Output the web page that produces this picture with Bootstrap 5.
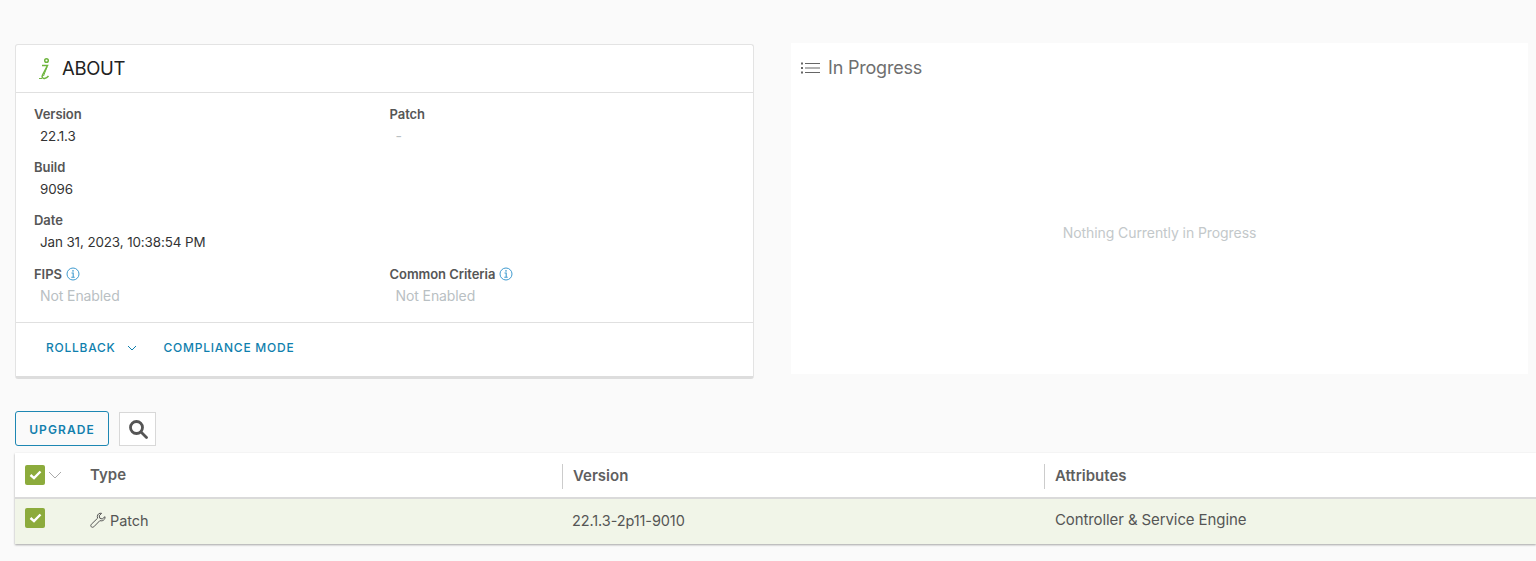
<!DOCTYPE html>
<html lang="en">
<head>
<meta charset="utf-8">
<title>System Update</title>
<link href="https://cdn.jsdelivr.net/npm/bootstrap@5.3.0/dist/css/bootstrap.min.css" rel="stylesheet">
<style>
html,body{height:561px;overflow:hidden}
body{background:#fafafa;font-family:Inter,"Liberation Sans",sans-serif;color:#333;font-size:13px;padding:43px 8px 0 15px}
.top-area{display:grid;grid-template-columns:739px 737px;column-gap:37px;align-items:start}
.about-panel{height:335px;margin-top:1px;background:#fff;border:1px solid #e3e3e3;border-bottom:3px solid #ddd;border-radius:3px;overflow:hidden}
.about-head{height:48px;border-bottom:1px solid #e0e0e0;padding-left:21px;gap:9px;font-size:18.5px;color:#222;letter-spacing:-.3px}
.about-body{height:230px;border-bottom:1px solid #e0e0e0;padding:13px 18px 0;display:grid;grid-template-columns:355.5px 1fr;grid-auto-rows:53.2px}
.fact-label{font-size:13px;font-weight:600;color:#565656;line-height:16px;height:16px;letter-spacing:-.05px}
.fact-value{font-size:13.4px;line-height:16px;margin-top:6px;padding-left:6px;color:#333;letter-spacing:-.1px}
.muted-value{color:#b9c0c3;font-size:14px}
.about-foot{height:50px;padding-left:30px;gap:27px}
.action-link{font-size:12px;font-weight:500;letter-spacing:.75px;color:#0f7fae;text-decoration:none;gap:11px}
.progress-panel{height:331px;background:#fff;padding:15px 10px;color:#6f6f6f}
.progress-title{gap:8px;font-size:18px;line-height:20px;letter-spacing:-.2px}
.progress-empty{height:290px;font-size:14px;color:#c3c8ca;padding-top:19px;letter-spacing:-.08px}
.tool-row{margin-top:32px;gap:10px;height:36px}
.upgrade-btn{width:94px;height:35px;padding:2px 0 0;font-size:12px;font-weight:600;letter-spacing:1.1px;color:#127fad;background:transparent;border:1px solid #1d87b3;border-radius:3px}
.search-btn{width:37px;height:34px;padding:0;margin-top:1px;background:#fff;border:1px solid #d8d8d8;border-radius:0;color:#555}
.update-table{margin-top:6px;width:1521px;background:#fff;box-shadow:0 1px 2px rgba(0,0,0,.35)}
.table-line{display:grid;grid-template-columns:65px 482px 482px 1fr}
.head-line{height:46px;border-bottom:2px solid #dadada;font-size:15px;font-weight:600;color:#5f5f5f}
.body-line{height:45px;padding-bottom:2px;background:#f1f5e8;color:#555;font-size:14.500px;letter-spacing:-.1px}
.head-cell{padding-left:10px;height:25px;margin-top:2px;border-left:1px solid #ccc}
.first-cell{padding-left:10px;border-left:0}
.type-cell{padding-left:10px}
.tick-box{width:20px;height:20px;background:#8cab3c;border-radius:2px}
.tick-raised{margin-bottom:6px}
.caret-wrap{margin-left:3px}
.body-cell{padding-left:10px}
.body-wide{padding-left:11px;font-size:15px}
</style>
</head>
<body>
<div class="top-area">
  <section class="about-panel">
    <div class="about-head d-flex align-items-center">
      <svg width="16" height="24" viewBox="0 0 16 24" fill="none" stroke="#6fb53f" stroke-width="1.500"><circle cx="9.500" cy="3.500" r="1.800"/><path d="M5 8.500h5.500L5.500 18c-1 2.200 0 3.700 2 3.400 1.500-.3 3-1.200 4-2.400"/><path d="M10 10L6.500 19" stroke-width="1"/><path d="M2 21.500h3" stroke-width="1"/></svg>
      <span>ABOUT</span>
    </div>
    <div class="about-body">
      <div><div class="fact-label">Version</div><div class="fact-value">22.1.3</div></div>
      <div><div class="fact-label">Patch</div><div class="fact-value muted-value">-</div></div>
      <div><div class="fact-label">Build</div><div class="fact-value">9096</div></div>
      <div></div>
      <div><div class="fact-label">Date</div><div class="fact-value">Jan 31, 2023, 10:38:54 PM</div></div>
      <div></div>
      <div><div class="fact-label d-flex align-items-center gap-1">FIPS <svg width="14" height="14" viewBox="0 0 14 14" fill="none" stroke="#3f9bd0"><circle cx="7" cy="7" r="6"/><path d="M5.500 6h1.700v4M5.300 10.200h3.400" stroke-width="1.100"/><circle cx="7" cy="3.900" r=".8" fill="#3f9bd0" stroke="none"/></svg></div><div class="fact-value muted-value">Not Enabled</div></div>
      <div><div class="fact-label d-flex align-items-center gap-1">Common Criteria <svg width="14" height="14" viewBox="0 0 14 14" fill="none" stroke="#3f9bd0"><circle cx="7" cy="7" r="6"/><path d="M5.500 6h1.700v4M5.300 10.200h3.400" stroke-width="1.100"/><circle cx="7" cy="3.900" r=".8" fill="#3f9bd0" stroke="none"/></svg></div><div class="fact-value muted-value">Not Enabled</div></div>
    </div>
    <div class="about-foot d-flex align-items-center">
      <a href="#" class="action-link d-flex align-items-center">ROLLBACK <svg width="10" height="6" viewBox="0 0 10 6" fill="none" stroke="#0f7fae"><path d="M1 1l4 4 4-4"/></svg></a>
      <a href="#" class="action-link">COMPLIANCE MODE</a>
    </div>
  </section>
  <section class="progress-panel">
    <div class="progress-title d-flex align-items-center">
      <svg width="19" height="14" viewBox="0 0 19 14" fill="#666" stroke="none"><rect x="0" y="1.500" width="2" height="2"/><rect x="0" y="6" width="2" height="2"/><rect x="0" y="10.500" width="2" height="2"/><rect x="4" y="2" width="15" height="1"/><rect x="4" y="6.500" width="15" height="1"/><rect x="4" y="11" width="15" height="1"/></svg>
      <span>In Progress</span>
    </div>
    <div class="progress-empty d-flex align-items-center justify-content-center">Nothing Currently in Progress</div>
  </section>
</div>
<div class="tool-row d-flex">
  <button class="btn upgrade-btn" type="button">UPGRADE</button>
  <button class="btn search-btn d-flex align-items-center justify-content-center" type="button" aria-label="Search"><svg width="20" height="20" viewBox="0 0 20 20" fill="none" stroke="#555" stroke-width="2.800"><circle cx="8.500" cy="8.500" r="6"/><path d="M13 13l5.500 5.500" stroke-linecap="round"/></svg></button>
</div>
<div class="update-table">
  <div class="table-line head-line align-items-center">
    <div class="d-flex align-items-center first-cell">
      <span class="tick-box d-flex align-items-center justify-content-center"><svg width="13" height="10" viewBox="0 0 13 10" fill="none" stroke="#fff" stroke-width="2.400"><path d="M1.500 5l3.500 3.200L11.500 1.500"/></svg></span>
      <span class="caret-wrap d-flex"><svg width="14" height="8" viewBox="0 0 14 8" fill="none" stroke="#aaa"><path d="M1 1l6 6 6-6"/></svg></span>
    </div>
    <div class="type-cell">Type</div>
    <div class="head-cell d-flex align-items-center">Version</div>
    <div class="head-cell d-flex align-items-center">Attributes</div>
  </div>
  <div class="table-line body-line align-items-center">
    <div class="first-cell d-flex"><span class="tick-box tick-raised d-flex align-items-center justify-content-center"><svg width="13" height="10" viewBox="0 0 13 10" fill="none" stroke="#fff" stroke-width="2.400"><path d="M1.500 5l3.500 3.200L11.500 1.500"/></svg></span></div>
    <div class="type-cell d-flex align-items-center gap-1"><svg width="16" height="17" viewBox="0 0 16 16" fill="none" stroke="#555" stroke-linejoin="round"><path d="M15 4.200l-2.800 2.300-2.400-.8-.6-2.400L11.600.8C9.400.2 7.200 1.800 7.300 4.200c0 .6.1 1 .3 1.500L1.300 11.800c-.7.8-.7 1.800 0 2.500s1.800.6 2.500 0l6.100-6.200c2.700 1 5.500-1 5.100-3.900z"/></svg>Patch</div>
    <div class="body-cell">22.1.3-2p11-9010</div>
    <div class="body-wide">Controller &amp; Service Engine</div>
  </div>
</div>
<script src="https://cdn.jsdelivr.net/npm/bootstrap@5.3.0/dist/js/bootstrap.bundle.min.js"></script>
</body>
</html>
